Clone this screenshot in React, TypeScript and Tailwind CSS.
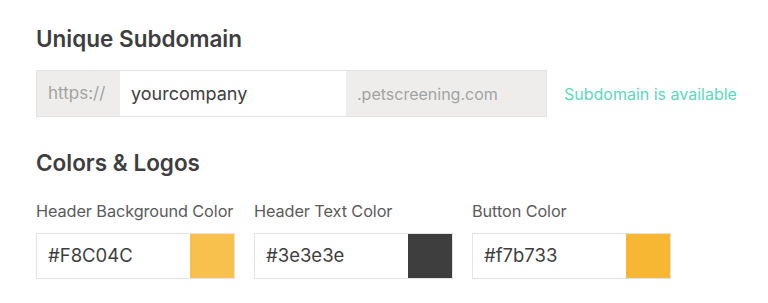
import React from 'react';

const font = { fontFamily: 'Inter, "Noto Sans", sans-serif' };

function ColorField({ label, value, swatch }: { label: string; value: string; swatch: string }) {
  return (
    <div className="flex flex-col w-[199px]">
      <label className="text-[16.3px] leading-none text-[#5b5b5b] h-[22px] pt-[3px] tracking-[-0.1px]">{label}</label>
      <div className="mt-[11px] flex h-[46px] border border-[#e3e3e3] bg-white">
        <div className="flex-1 flex items-center pl-[11px] text-[18.5px] text-[#3e3e3e]">{value}</div>
        <div className={`w-[44px] ${swatch}`} />
      </div>
    </div>
  );
}

export default function App() {
  return (
    <div className="bg-white w-[768px] h-[303px] pl-[36px] pt-[26px]" style={font}>
      <h2 className="text-[22.5px] font-semibold leading-[26px] text-[#3e3e3e]">Unique Subdomain</h2>
      <div className="mt-[18px] flex items-center">
        <div className="flex h-[47px] w-[511px] border border-[#e3e3e3] bg-[#eeedeb]">
          <div className="w-[83px] flex items-center pl-[11px] text-[17px] text-[#a3a3a3]">https://</div>
          <div className="w-[226px] bg-white flex items-center pl-[11px] text-[18px] text-[#3e3e3e]">yourcompany</div>
          <div className="flex-1 flex items-center pl-[11px] text-[16px] text-[#a3a3a3]">.petscreening.com</div>
        </div>
        <span className="ml-[17px] text-[16px] text-[#5cd8c1]">Subdomain is available</span>
      </div>
      <h2 className="mt-[33px] text-[22.5px] font-semibold leading-[26px] text-[#3e3e3e]">Colors &amp; Logos</h2>
      <div className="mt-[24px] flex gap-[19px]">
        <ColorField label="Header Background Color" value="#F8C04C" swatch="bg-[#f8c04c]" />
        <ColorField label="Header Text Color" value="#3e3e3e" swatch="bg-[#3e3e3e]" />
        <ColorField label="Button Color" value="#f7b733" swatch="bg-[#f7b733]" />
      </div>
    </div>
  );
}
